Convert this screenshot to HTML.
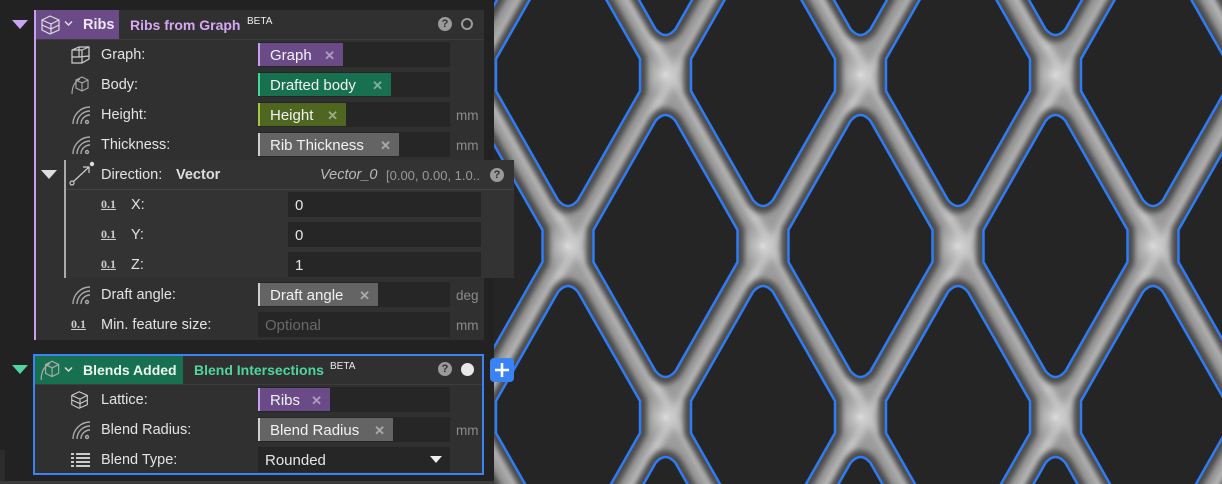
<!DOCTYPE html>
<html><head><meta charset="utf-8"><style>
*{box-sizing:border-box;margin:0;padding:0}
html,body{width:1222px;height:484px;overflow:hidden}
body{background:#252525;font-family:"Liberation Sans",sans-serif;font-size:14.5px;color:#e6e6e6;position:relative}
.a{position:absolute}
.panel{left:0;top:0;width:494px;height:484px;background:#222}
.card{background:#303030}
.lbl{position:absolute;color:#e4e4e4;white-space:nowrap}
.inp{position:absolute;background:#262626;height:25px;overflow:hidden}
.chip{position:absolute;top:1px;height:23px;line-height:25px;padding-left:10px;color:#f2f2f2;border-left:2px solid;font-size:15px}
.x{position:absolute;right:8px;top:0;color:rgba(255,255,255,.45);font-weight:bold;font-size:13px}
.unit{position:absolute;color:#8c8c8c;font-size:13.5px}
.ico{position:absolute}
.q{position:absolute;width:14px;height:14px;border-radius:50%;background:#9a9a9a;color:#303030;font-size:11px;font-weight:bold;text-align:center;line-height:14px}
.n01{position:absolute;font-size:12px;font-family:'Liberation Serif',serif;font-weight:bold;color:#ccc;text-decoration:underline}
</style></head><body>
<svg class="a" style="left:0;top:0" width="1222" height="484">
<defs>
<clipPath id="c"><rect x="494" y="0" width="728" height="484"/></clipPath>
<radialGradient id="n"><stop offset="0" stop-color="#dcdcdc"/><stop offset="1" stop-color="#a0a0a0" stop-opacity="0"/></radialGradient>
<filter id="b"><feGaussianBlur stdDeviation="3"/></filter>
<path id="h" d="M-10,-125 Q0,-137 10,-125 L72,-16 L72,16 L10,125 Q0,137 -10,125 L-72,16 L-72,-16 Z"/>
<g id="H">
<use href="#h" x="470.5" y="-96"/><use href="#h" x="665.5" y="-96"/><use href="#h" x="860.5" y="-96"/><use href="#h" x="1055.5" y="-96"/><use href="#h" x="1250.5" y="-96"/>
<use href="#h" x="373" y="75"/><use href="#h" x="568" y="75"/><use href="#h" x="763" y="75"/><use href="#h" x="958" y="75"/><use href="#h" x="1153" y="75"/><use href="#h" x="1348" y="75"/>
<use href="#h" x="470.5" y="246"/><use href="#h" x="665.5" y="246"/><use href="#h" x="860.5" y="246"/><use href="#h" x="1055.5" y="246"/><use href="#h" x="1250.5" y="246"/>
<use href="#h" x="373" y="417"/><use href="#h" x="568" y="417"/><use href="#h" x="763" y="417"/><use href="#h" x="958" y="417"/><use href="#h" x="1153" y="417"/><use href="#h" x="1348" y="417"/>
<use href="#h" x="470.5" y="588"/><use href="#h" x="665.5" y="588"/><use href="#h" x="860.5" y="588"/><use href="#h" x="1055.5" y="588"/><use href="#h" x="1250.5" y="588"/>
</g>
</defs>
<g clip-path="url(#c)">
<rect x="494" y="0" width="728" height="484" fill="#9c9c9c"/>
<g stroke="#c6c6c6" stroke-width="9" fill="none" filter="url(#b)">
<path d="M-259.6,-191L256.5,709M-64.6,-191L451.5,709M130.4,-191L646.5,709M325.4,-191L841.5,709M520.4,-191L1036.5,709M715.4,-191L1231.5,709M910.4,-191L1426.5,709M1105.4,-191L1621.5,709M1300.4,-191L1816.5,709
M436.6,-191L-79.5,709M631.6,-191L115.5,709M826.6,-191L310.5,709M1021.6,-191L505.5,709M1216.6,-191L700.5,709M1411.6,-191L895.5,709M1606.6,-191L1090.5,709M1801.6,-191L1285.5,709M1996.6,-191L1480.5,709"/>
</g>
<g fill="url(#n)">
<circle cx="568" cy="246" r="28"/><circle cx="763" cy="246" r="28"/><circle cx="958" cy="246" r="28"/><circle cx="1153" cy="246" r="28"/>
<circle cx="665.5" cy="75" r="28"/><circle cx="860.5" cy="75" r="28"/><circle cx="1055.5" cy="75" r="28"/>
<circle cx="665.5" cy="417" r="28"/><circle cx="860.5" cy="417" r="28"/><circle cx="1055.5" cy="417" r="28"/>
</g>
<use href="#H" fill="none" stroke="#4a4a4a" stroke-width="14" filter="url(#b)"/>
<use href="#H" fill="#252525" stroke="#2f7cf6" stroke-width="2.5"/>
</g></svg>

<div class="a panel"></div>
<div class="a" style="left:0;top:450px;width:5px;height:34px;background:#2c2c2c"></div>
<div class="a" style="left:0;top:481px;width:494px;height:3px;background:#3a3a3a"></div>

<!-- card 1 -->
<div class="a card" style="left:34px;top:10px;width:450px;height:330px;border-left:2px solid #c8a0ee"></div>
<div class="a" style="left:12px;top:20px;width:0;height:0;border-left:8px solid transparent;border-right:8px solid transparent;border-top:9px solid #c9a6ef"></div>
<div class="a" style="left:36px;top:10px;width:83px;height:29px;background:#6a4b88"></div>
<svg class="ico" style="left:39px;top:13px" width="24" height="24" viewBox="0 0 24 24" fill="none" stroke="#ddd" stroke-width="1.2"><path d="M3 7l8-4 9 4v10l-9 4-8-4z M3 7l9 4 8-4 M12 11v10 M3 12l9 4 8-4"/></svg>
<svg class="ico" style="left:64px;top:20px" width="9" height="7" viewBox="0 0 9 7" fill="none" stroke="#ddd" stroke-width="1.5"><path d="M1 1.5l3.5 3.5 3.5-3.5"/></svg>
<div class="lbl" style="left:83px;top:17px;font-weight:bold;font-size:14.5px;color:#f0e6f8">Ribs</div>
<div class="lbl" style="left:130px;top:17px;font-weight:bold;font-size:14px;color:#d7a8f6">Ribs from Graph</div>
<div class="lbl" style="left:247px;top:16px;font-size:10px;color:#eee">BETA</div>
<div class="q" style="left:438px;top:17px">?</div>
<div class="a" style="left:461px;top:18px;width:12px;height:12px;border-radius:50%;border:2px solid #9a9a9a"></div>
<div class="a" style="left:36px;top:39px;width:448px;height:1px;background:#3c3c3c"></div>

<svg class="ico" style="left:70px;top:44px" width="22" height="22" viewBox="0 0 22 22" fill="none" stroke="#ccc" stroke-width="1.2"><path d="M2 6l7-3h10v12l-7 4H2z M2 6h10v13 M12 6l7-3 M9 3v10H2 M9 13l10-1"/></svg>
<div class="lbl" style="left:101px;top:47px">Graph:</div>
<div class="inp" style="left:258px;top:42px;width:192px"><div class="chip" style="left:0;width:85px;background:#6a4b88;border-color:#c8a0ee">Graph<span class="x">✕</span></div></div>

<svg class="ico" style="left:70px;top:74px" width="22" height="22" viewBox="0 0 22 22" fill="none" stroke="#aaa" stroke-width="1.1"><path d="M6 6l6-3 6 3v8l-6 3-6-3z M6 6l6 3 6-3 M12 9v8 M2 20c0-6 2-12 8-15"/></svg>
<div class="lbl" style="left:101px;top:77px">Body:</div>
<div class="inp" style="left:258px;top:72px;width:192px"><div class="chip" style="left:0;width:133px;background:#17704f;border-color:#48d49d">Drafted body<span class="x">✕</span></div></div>

<svg class="ico" style="left:70px;top:104px" width="22" height="22" viewBox="0 0 22 22" fill="none" stroke="#aaa" stroke-width="1.4"><path d="M3 20a17 17 0 0 1 17-17 M7 20a13 13 0 0 1 13-13 M11 20a9 9 0 0 1 9-9"/><circle cx="17" cy="18" r="1.5"/></svg>
<div class="lbl" style="left:101px;top:107px">Height:</div>
<div class="inp" style="left:258px;top:102px;width:192px"><div class="chip" style="left:0;width:88px;background:#4e6620;border-color:#a6c545">Height<span class="x">✕</span></div></div>
<div class="unit" style="left:456px;top:108px">mm</div>

<svg class="ico" style="left:70px;top:134px" width="22" height="22" viewBox="0 0 22 22" fill="none" stroke="#aaa" stroke-width="1.4"><path d="M3 20a17 17 0 0 1 17-17 M7 20a13 13 0 0 1 13-13 M11 20a9 9 0 0 1 9-9"/><circle cx="17" cy="18" r="1.5"/></svg>
<div class="lbl" style="left:101px;top:137px">Thickness:</div>
<div class="inp" style="left:258px;top:132px;width:192px"><div class="chip" style="left:0;width:141px;background:#646464;border-color:#cfcfcf">Rib Thickness<span class="x">✕</span></div></div>
<div class="unit" style="left:456px;top:138px">mm</div>

<svg class="ico" style="left:70px;top:284px" width="22" height="22" viewBox="0 0 22 22" fill="none" stroke="#aaa" stroke-width="1.4"><path d="M3 20a17 17 0 0 1 17-17 M7 20a13 13 0 0 1 13-13 M11 20a9 9 0 0 1 9-9"/><circle cx="17" cy="18" r="1.5"/></svg>
<div class="lbl" style="left:101px;top:287px">Draft angle:</div>
<div class="inp" style="left:258px;top:282px;width:192px"><div class="chip" style="left:0;width:120px;background:#646464;border-color:#cfcfcf">Draft angle<span class="x">✕</span></div></div>
<div class="unit" style="left:456px;top:288px">deg</div>

<div class="n01" style="left:71px;top:317px">0.1</div>
<div class="lbl" style="left:101px;top:317px">Min. feature size:</div>
<div class="inp" style="left:258px;top:312px;width:192px"><span class="a" style="left:7px;top:5px;color:#6a6a6a;font-size:15px">Optional</span></div>
<div class="unit" style="left:456px;top:318px">mm</div>

<!-- direction popup -->
<div class="a" style="left:64px;top:160px;width:450px;height:118px;background:#333;border-left:2px solid #aaa"></div>
<div class="a" style="left:41px;top:170px;width:0;height:0;border-left:8px solid transparent;border-right:8px solid transparent;border-top:9px solid #ddd"></div>
<svg class="ico" style="left:68px;top:161px" width="28" height="26" viewBox="0 0 28 26" fill="none" stroke="#ccc" stroke-width="1.2"><circle cx="4" cy="22" r="2"/><path d="M5.5 20.5L21 6 M15 6h6v6"/><circle cx="24" cy="3" r="2.2" fill="#ddd" stroke="none"/></svg>
<div class="lbl" style="left:101px;top:167px">Direction:</div>
<div class="lbl" style="left:176px;top:167px;font-weight:bold;color:#ddd">Vector</div>
<div class="lbl" style="left:320px;top:167px;font-style:italic;color:#bbb">Vector_0</div>
<div class="lbl" style="left:386px;top:168px;font-size:13px;color:#999">[0.00, 0.00, 1.0..</div>
<div class="q" style="left:490px;top:168px">?</div>
<div class="a" style="left:66px;top:189px;width:448px;height:1px;background:#444"></div>
<div class="n01" style="left:101px;top:197px">0.1</div>
<div class="lbl" style="left:131px;top:197px">X:</div>
<div class="inp" style="left:288px;top:192px;width:193px"><span class="a" style="left:7px;top:5px;font-size:15px">0</span></div>
<div class="n01" style="left:101px;top:227px">0.1</div>
<div class="lbl" style="left:131px;top:227px">Y:</div>
<div class="inp" style="left:288px;top:222px;width:193px"><span class="a" style="left:7px;top:5px;font-size:15px">0</span></div>
<div class="n01" style="left:101px;top:257px">0.1</div>
<div class="lbl" style="left:131px;top:257px">Z:</div>
<div class="inp" style="left:288px;top:252px;width:193px"><span class="a" style="left:7px;top:5px;font-size:15px">1</span></div>

<!-- card 2 -->
<div class="a card" style="left:33px;top:354px;width:451px;height:121px;border:2px solid #3b82f6"></div>
<div class="a" style="left:12px;top:365px;width:0;height:0;border-left:8px solid transparent;border-right:8px solid transparent;border-top:9px solid #4fd6a0"></div>
<div class="a" style="left:35px;top:356px;width:148px;height:28px;background:#17704f"></div>
<svg class="ico" style="left:39px;top:358px" width="24" height="24" viewBox="0 0 22 22" fill="none" stroke="#aaa" stroke-width="1.1"><path d="M6 6l6-3 6 3v8l-6 3-6-3z M6 6l6 3 6-3 M12 9v8 M2 20c0-6 2-12 8-15"/></svg>
<svg class="ico" style="left:64px;top:366px" width="9" height="7" viewBox="0 0 9 7" fill="none" stroke="#ddd" stroke-width="1.5"><path d="M1 1.5l3.5 3.5 3.5-3.5"/></svg>
<div class="lbl" style="left:83px;top:362px;font-weight:bold;font-size:14px;color:#eaf7f0">Blends Added</div>
<div class="lbl" style="left:194px;top:362px;font-weight:bold;font-size:14px;color:#4fd6a0">Blend Intersections</div>
<div class="lbl" style="left:330px;top:361px;font-size:10px;color:#eee">BETA</div>
<div class="q" style="left:438px;top:362px">?</div>
<div class="a" style="left:461px;top:363px;width:13px;height:13px;border-radius:50%;background:#e8e8e8"></div>
<div class="a" style="left:35px;top:384px;width:447px;height:1px;background:#3c3c3c"></div>
<div class="a" style="left:490px;top:358px;width:24px;height:24px;border-radius:4px;background:#3b82f6"></div>
<svg class="ico" style="left:490px;top:358px" width="24" height="24"><path d="M12 5v14M5 12h14" stroke="#fff" stroke-width="2.6"/></svg>

<svg class="ico" style="left:69px;top:389px" width="22" height="22" viewBox="0 0 24 24" fill="none" stroke="#ccc" stroke-width="1.2"><path d="M3 7l8-4 9 4v10l-9 4-8-4z M3 7l9 4 8-4 M12 11v10 M3 12l9 4 8-4"/></svg>
<div class="lbl" style="left:101px;top:392px">Lattice:</div>
<div class="inp" style="left:258px;top:387px;width:192px"><div class="chip" style="left:0;width:72px;background:#6a4b88;border-color:#c8a0ee">Ribs<span class="x">✕</span></div></div>

<svg class="ico" style="left:70px;top:419px" width="22" height="22" viewBox="0 0 22 22" fill="none" stroke="#aaa" stroke-width="1.4"><path d="M3 20a17 17 0 0 1 17-17 M7 20a13 13 0 0 1 13-13 M11 20a9 9 0 0 1 9-9"/><circle cx="17" cy="18" r="1.5"/></svg>
<div class="lbl" style="left:101px;top:422px">Blend Radius:</div>
<div class="inp" style="left:258px;top:417px;width:192px"><div class="chip" style="left:0;width:135px;background:#646464;border-color:#cfcfcf">Blend Radius<span class="x">✕</span></div></div>
<div class="unit" style="left:456px;top:423px">mm</div>

<svg class="ico" style="left:71px;top:452px" width="20" height="16" viewBox="0 0 20 16" fill="#ccc"><rect x="0" y="1" width="3" height="2"/><rect x="5" y="1" width="14" height="2"/><rect x="0" y="5" width="3" height="2"/><rect x="5" y="5" width="14" height="2"/><rect x="0" y="9" width="3" height="2"/><rect x="5" y="9" width="14" height="2"/><rect x="0" y="13" width="3" height="2"/><rect x="5" y="13" width="14" height="2"/></svg>
<div class="lbl" style="left:101px;top:452px">Blend Type:</div>
<div class="inp" style="left:258px;top:447px;width:192px"><span class="a" style="left:7px;top:5px;font-size:15px">Rounded</span><div class="a" style="left:172px;top:9px;width:0;height:0;border-left:6px solid transparent;border-right:6px solid transparent;border-top:7px solid #eee"></div></div>
</body></html>
